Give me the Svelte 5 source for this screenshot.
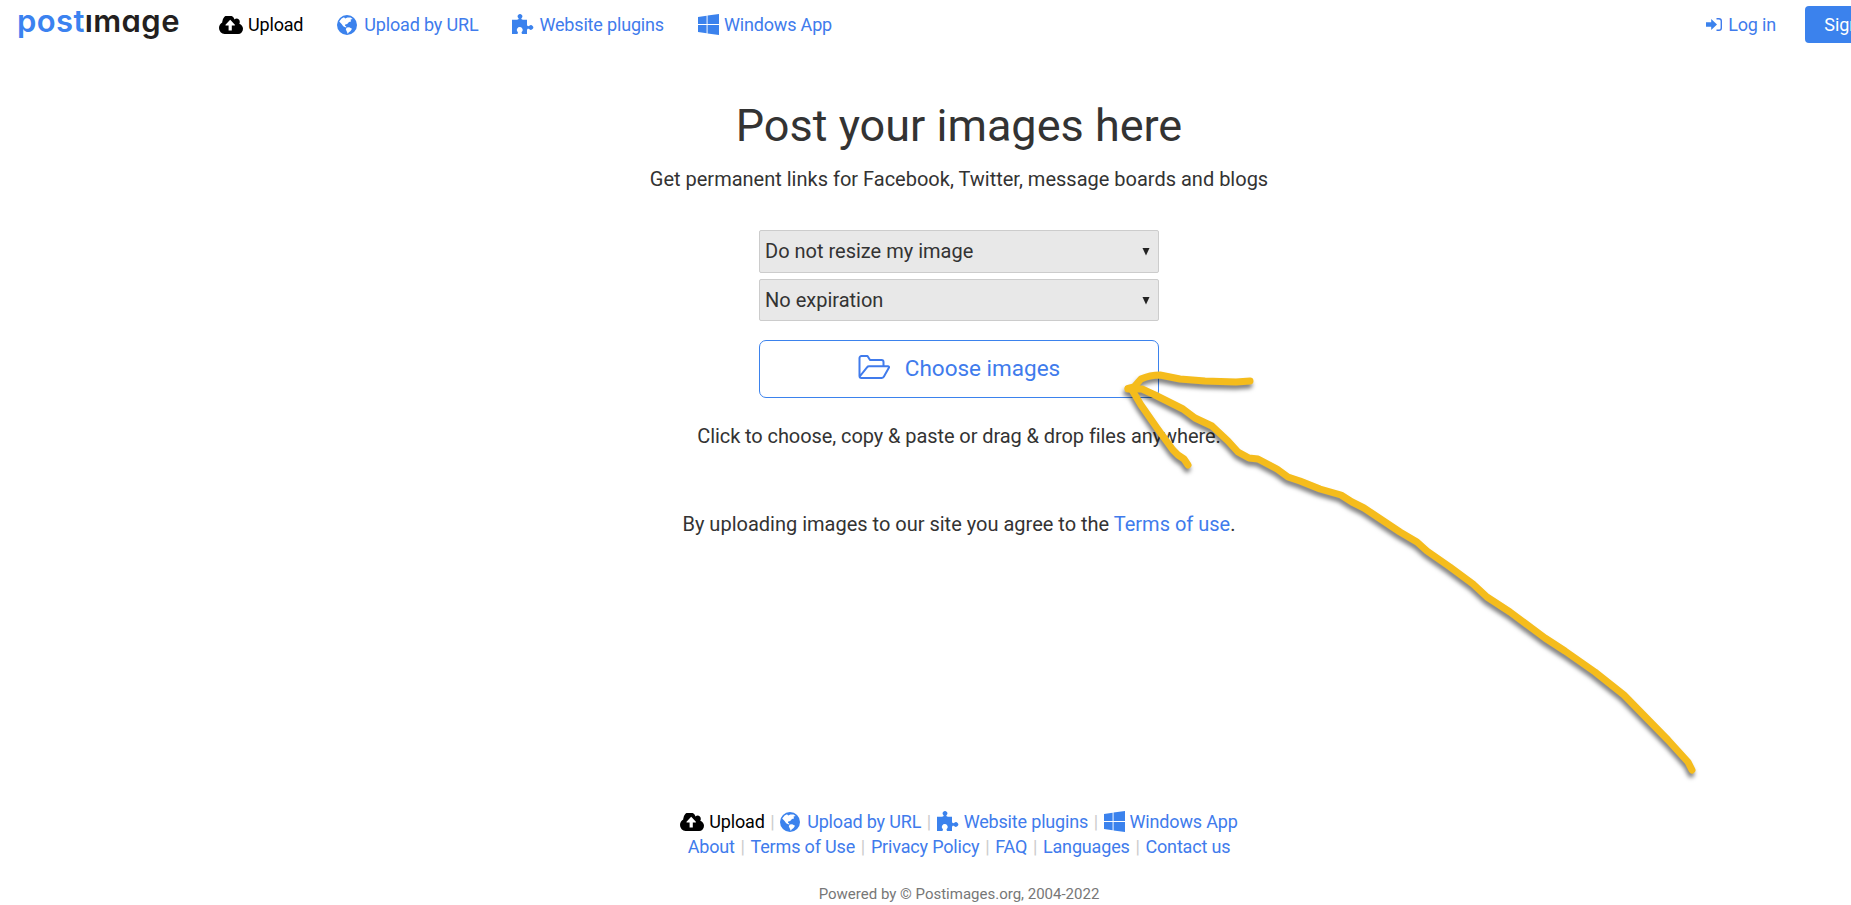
<script>
  const links = [
    { icon: "cloud", label: "Upload", active: true },
    { icon: "globe", label: "Upload by URL" },
    { icon: "puzzle", label: "Website plugins" },
    { icon: "windows", label: "Windows App" },
  ];

  const footerLinks = ["About", "Terms of Use", "Privacy Policy", "FAQ", "Languages", "Contact us"];

  const selects = ["Do not resize my image", "No expiration"];
</script>

{#snippet icon(name)}
  {#if name === "cloud"}
    <svg class="icon cloud" viewBox="0 256 1920 1344" preserveAspectRatio="none">
      <path d="M1280 928q0-14-9-23l-352-352q-9-9-23-9t-23 9l-351 351q-10 12-10 24 0 14 9 23t23 9h224v352q0 13 9.5 22.5t22.5 9.5h192q13 0 22.5-9.5t9.5-22.5v-352h224q13 0 22.5-9.5t9.5-22.5zm640 288q0 159-112.5 271.5t-271.5 112.5h-1088q-185 0-316.5-131.5t-131.5-316.5q0-130 70-240t188-165q-2-30-2-43 0-212 150-362t362-150q156 0 285.5 87t188.5 231q71-62 166-62 106 0 181 75t75 181q0 76-41 138 130 31 213.5 135.5t83.5 238.5z" />
    </svg>
  {:else if name === "globe"}
    <svg class="icon globe" viewBox="0 0 20 20">
      <circle cx="10" cy="10" r="10" />
      <path fill="#fff" d="M2.2 6.6 4.6 3.6 7 2.2 8.2 3.4 10.4 2.4 13.6 2.6 15.6 4 13.6 4.6 14 6.4 12 7 10.2 9 8.2 9.4 8 10.8 9.4 11.6 8.6 12.6 6.2 11.2 4.6 9z" />
      <path fill="#fff" d="M9.6 12.6 12.2 12.2 15 13.8 13.6 16 11.6 17.4 10.8 19 9.8 16.4 8.8 14.6z" />
    </svg>
  {:else if name === "puzzle"}
    <svg class="icon puzzle" viewBox="0 0 22 20">
      <path d="M0 5.7H5C6.8 5.6 6.9 5 6.5 4.2A2.3 2.3 0 1 1 9.5 4.2C9.1 5 9.2 5.6 11 5.7H15V10.5C15.2 12.3 16 12.4 17.4 11.8A2.3 2.3 0 1 1 17.4 15.2C16 14.6 15.2 14.7 15 16.5V20H10.2C9.1 19.2 9.5 18.2 10.3 17.3A2.9 2.9 0 1 0 5.2 17.3C6 18.2 6.4 19.2 5.3 20H0z" />
    </svg>
  {:else if name === "windows"}
    <svg class="icon windows" viewBox="0 128 1664 1664">
      <path d="M682 1006v651l-682-94v-557h682zm0-743v659h-682v-565zm982 743v786l-907-125v-661h907zm0-878v794h-907v-669z" />
    </svg>
  {/if}
{/snippet}

<div class="page">
  <header>
    <a class="logo" href="#home"><span>post</span>ımage</a>
    <nav>
      {#each links as link}
        <a href="#top" class="link" class:active={link.active}>{@render icon(link.icon)}{link.label}</a>
      {/each}
    </nav>
    <div class="account">
      <a href="#login" class="link">
        <svg class="icon login" viewBox="0 0 16 13">
          <path d="M0 4.2H5.2V1L11 6.5 5.2 12V8.8H0z" />
          <path fill="none" stroke="currentColor" stroke-width="1.4" d="M10.5 .8H13A2.3 2.3 0 0 1 15.3 3.1V9.9A2.3 2.3 0 0 1 13 12.2H10.5" />
        </svg>Log in
      </a>
      <a href="#signup" class="signup">Sign up</a>
    </div>
  </header>

  <main>
    <h1>Post your images here</h1>
    <p class="lead">Get permanent links for Facebook, Twitter, message boards and blogs</p>

    <div class="form">
      {#each selects as label}
        <div class="select">
          <span>{label}</span>
          <svg width="8" height="9" viewBox="0 0 8 9"><path d="M.5 1H7.5L4 8.5z" /></svg>
        </div>
      {/each}
      <button class="choose">
        <svg class="folder" viewBox="0 0 32 24">
          <path d="M1.5 21V3A2 2 0 0 1 3.5 1H9.5L12 5H23.5A2 2 0 0 1 25.5 7V11M1.5 21A2 2 0 0 0 3.5 23H23.5Q25 23 25.8 21.8L31 12.6Q31.2 11.3 30 11.3H11Q9.8 11.3 9 12.3L1.7 21.5" />
        </svg>
        Choose images
      </button>
    </div>

    <p class="hint">Click to choose, copy &amp; paste or drag &amp; drop files anywhere.</p>
    <p class="terms">By uploading images to our site you agree to the <a href="#terms">Terms of use</a>.</p>
  </main>

  <footer>
    <div class="row">
      {#each links as link, i}
        {#if i > 0}<span class="sep">|</span>{/if}
        <a href="#top" class="link" class:active={link.active}>{@render icon(link.icon)}{link.label}</a>
      {/each}
    </div>
    <div class="row">
      {#each footerLinks as label, i}
        {#if i > 0}<span class="sep">|</span>{/if}
        <a href="#top">{label}</a>
      {/each}
    </div>
    <p class="powered">Powered by © Postimages.org, 2004-2022</p>
  </footer>

  <!-- hand-drawn arrow over the page -->
  <svg class="arrow" viewBox="0 0 1918 905">
    <path d="M1128 388.5 L1134 387 L1141 379 Q1150 375 1160 375 L1180 379 L1205 381 L1236 382 L1250 381" />
    <path d="M1132 390 L1141 405 L1157 428 L1173 450 L1178 455 L1184 459 L1188 465" />
    <path d="M1128 389 L1142 389 L1155 395 L1173 404 L1183 409 L1195 418 L1212 426 L1228 441 L1238 452 L1249 458 L1258 459 L1277 469 L1288 477 L1300 481 L1320 489 L1341 495 L1352 502 L1364 508 L1400 532 L1417 542 L1427 551 L1450 567 L1473 584 L1487 597 L1510 612 L1545 638 L1565 651 L1595 672 L1624 695 L1668 740 L1688 762 L1692 770" />
  </svg>
</div>

<style>
  :global(body) {
    margin: 0;
    overflow: hidden;
    background: #fff;
  }

  .page {
    position: relative;
    width: 1918px;
    height: 905px;
    overflow: hidden;
    display: flex;
    flex-direction: column;
    font-family: Roboto, "Liberation Sans", sans-serif;
    font-size: 18px;
    color: #333;
  }

  a {
    color: #407bec;
    text-decoration: none;
  }

  p, h1 {
    margin: 0;
    font-weight: 400;
  }

  header {
    display: flex;
    align-items: center;
    height: 49px;
    padding: 0 15px 0 17px;
    box-sizing: border-box;
    letter-spacing: -0.17px;
  }

  .logo {
    width: 202px;
    margin-top: -7px;
    font-family: Inter, sans-serif;
    font-feature-settings: "cv11";
    font-size: 31px;
    font-weight: 600;
    letter-spacing: 0.4px;
    line-height: 40px;
    color: #231f20;
  }

  .logo span {
    color: #3b82f0;
  }

  nav {
    display: flex;
    gap: 34px;
  }

  .link {
    display: inline-flex;
    align-items: center;
    white-space: nowrap;
  }

  .link.active {
    color: #000;
  }

  .icon {
    fill: #3b82ed;
    margin-right: 5px;
  }

  .active .icon {
    fill: #000;
  }

  .cloud {
    width: 24px;
    height: 18px;
  }

  .globe {
    width: 20px;
    height: 20px;
    margin-right: 7px;
  }

  .puzzle {
    width: 22px;
    height: 20px;
    margin-top: -2px;
  }

  .windows {
    width: 21px;
    height: 21px;
  }

  .login {
    width: 16px;
    height: 13px;
    margin-right: 6px;
  }

  .account {
    display: flex;
    align-items: center;
    gap: 29px;
    margin-left: auto;
  }

  .signup {
    width: 98px;
    height: 37px;
    line-height: 37px;
    text-align: center;
    border-radius: 4px;
    background: #3b82ed;
    color: #fff;
    letter-spacing: 0;
  }

  main {
    display: flex;
    flex-direction: column;
    align-items: center;
    font-size: 20px;
  }

  h1 {
    margin-top: 47px;
    font-size: 45px;
    line-height: 60px;
  }

  .lead {
    margin-top: 9px;
    line-height: 28px;
  }

  .form {
    display: flex;
    flex-direction: column;
    gap: 6px;
    width: 400px;
    margin-top: 37px;
  }

  .select {
    display: flex;
    align-items: center;
    justify-content: space-between;
    height: 43px;
    padding: 0 8px 1px 5px;
    box-sizing: border-box;
    border: 1px solid #ccc;
    border-radius: 2px;
    background: #e8e8e8;
  }

  .select + .select {
    height: 42px;
    padding-bottom: 0;
  }

  .select svg {
    fill: #222;
  }

  .choose {
    display: flex;
    align-items: center;
    justify-content: center;
    gap: 15px;
    height: 58px;
    margin-top: 13px;
    padding-bottom: 3px;
    border: 1px solid #3b82ed;
    border-radius: 7px;
    background: #fff;
    color: #407bec;
    font-family: inherit;
    font-size: 22.5px;
  }

  .folder {
    width: 32px;
    height: 24px;
    margin-top: -3px;
    fill: none;
    stroke: currentColor;
    stroke-width: 2;
    stroke-linejoin: round;
  }

  .hint {
    margin-top: 24px;
    line-height: 28px;
    letter-spacing: -0.08px;
  }

  .terms {
    margin-top: 60px;
    line-height: 28px;
  }

  footer {
    margin-top: auto;
    text-align: center;
  }

  .row {
    display: flex;
    justify-content: center;
    align-items: center;
    gap: 5.6px;
    height: 25px;
    letter-spacing: -0.17px;
  }

  .row + .row {
    gap: 5.8px;
  }

  .sep {
    color: #ccc;
  }

  .powered {
    margin: 26px 0 0;
    height: 20px;
    font-size: 15px;
    line-height: 18px;
    color: #777;
  }

  .arrow {
    position: absolute;
    top: 0;
    left: 0;
    width: 1918px;
    height: 905px;
    fill: none;
    stroke: #f5bc1c;
    stroke-width: 7;
    stroke-linejoin: round;
    stroke-linecap: round;
    filter: drop-shadow(-1px 4px 2px rgba(0, 0, 0, 0.5));
    pointer-events: none;
  }
</style>
